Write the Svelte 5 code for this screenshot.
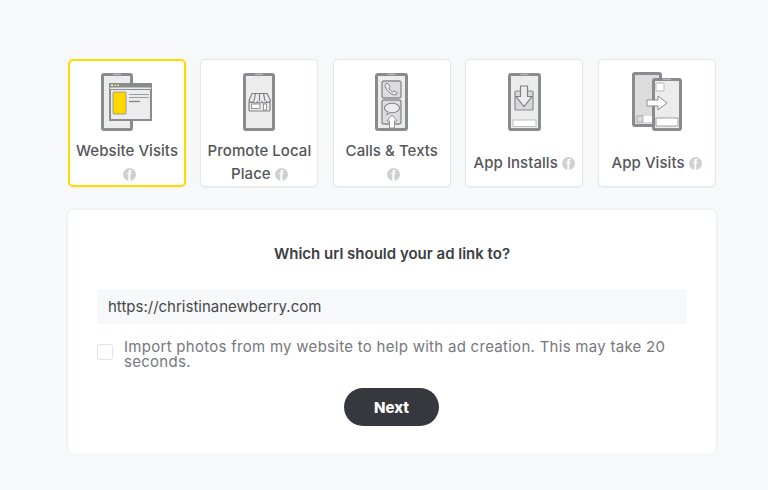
<script>
  const cards = [
    { label: 'Website Visits', icon: 'web', active: true },
    { label: 'Promote Local Place', icon: 'store' },
    { label: 'Calls & Texts', icon: 'calls' },
    { label: 'App Installs', icon: 'install' },
    { label: 'App Visits', icon: 'visits' }
  ];
</script>

{#snippet phone(x, y, w, h)}
  <rect x={x + 1.5} y={y + 1.5} width={w - 3} height={h - 3} rx="1.5" fill="#ececec" stroke="#8a8b8e" stroke-width="3" />
  <rect x={x + w / 2 - 4} y={y + 0.8} width="8" height="1" fill="#c8c8ca" />
{/snippet}

<main class="page">
  <section class="cards">
    {#each cards as card}
      <article class="card" class:active={card.active}>
        <svg class="art" viewBox="0 0 60 60" width="60" height="60" aria-hidden="true">
          {#if card.icon === 'web'}
            {@render phone(4, 1, 32, 58)}
            <rect x="12.5" y="11.5" width="42" height="37" fill="#ececec" stroke="#8a8b8e" />
            <rect x="12" y="11" width="43" height="4.5" fill="#8a8b8e" />
            <rect x="14" y="12.5" width="2" height="1.5" fill="#fff" />
            <rect x="17" y="12.5" width="2" height="1.5" fill="#ffd800" />
            <rect x="20" y="12.5" width="2" height="1.5" fill="#ddd" />
            <rect x="13.5" y="17.5" width="40" height="30" fill="#ececec" stroke="#8a8b8e" />
            <rect x="16" y="20" width="13" height="22" rx="1" fill="#ffd800" stroke="#8a8b8e" stroke-width=".8" />
            <path d="M32 22.500h20M32 25.500h20" stroke="#9a9b9e" stroke-width="1" />
            <path d="M32 29.500h11" stroke="#8a8b8e" stroke-width="1.400" />
          {:else if card.icon === 'store'}
            {@render phone(14, 1, 32, 58)}
            <g fill="#ececec" stroke="#808185" stroke-width="1.200">
              <rect x="20" y="30" width="21" height="9" rx="1" />
              <path d="M23 21.500h15l3.500 7a2.400 2.400 0 0 1-4 1.200 2.600 2.600 0 0 1-4.500 0 2.600 2.600 0 0 1-4.500 0 2.600 2.600 0 0 1-4.500 0 2.400 2.400 0 0 1-4-1.200z" />
              <path d="M26.500 21.500l-1.500 7.500M30.500 21.500v7.500M34.500 21.500l1.500 7.500" />
              <rect x="22.500" y="32" width="8.500" height="4.500" fill="#fff" stroke-width=".8" />
              <rect x="34.500" y="32" width="3" height="6" fill="#fff" stroke-width=".8" />
            </g>
          {:else if card.icon === 'calls'}
            {@render phone(13, 1, 33, 58)}
            <rect x="20" y="9" width="19" height="17" rx="2" fill="#dcdcdc" stroke="#8a8b8e" stroke-width="1.300" />
            <rect x="20" y="28" width="19" height="24" rx="2" fill="#dcdcdc" stroke="#8a8b8e" stroke-width="1.300" />
            <path d="M24 11.500c-1.300 1-1.300 2.500 0 5 1.700 3 4.300 5.300 7.500 6.200 2.300.5 4-.7 4-1.700l-3.500-2.200-1.700 1.300c-1.700-.9-3-2.600-3.500-4.300l1.300-1.300-2.100-3z" fill="#ececec" stroke="#808185" />
            <ellipse cx="30" cy="36" rx="7.500" ry="4.800" fill="#ececec" stroke="#808185" stroke-width="1.100" />
            <path d="M26 40l-1.300 2.700 3.800-2" fill="#ececec" stroke="#808185" stroke-width=".9" />
            <path d="M30 43l-5 6h2.500v7h5v-7h2.500z" fill="#fff" stroke="#8a8b8e" stroke-width=".9" />
          {:else if card.icon === 'install'}
            {@render phone(14, 1, 33, 58)}
            <rect x="21" y="19" width="18" height="19" rx="1" fill="#d8d8d8" stroke="#8a8b8e" stroke-width="1.200" />
            <path d="M26.500 14h7v10.500h4.500l-8 10-8-10h4.500z" fill="#ececec" stroke="#808185" stroke-width="1.200" />
            <rect x="19" y="48" width="23" height="6.500" fill="#fff" stroke="#9a9b9e" stroke-width=".6" />
          {:else}
            <rect x="6.500" y="1.500" width="27" height="52" rx="1.500" fill="#dcdcdc" stroke="#8a8b8e" stroke-width="3" />
            <rect x="10" y="44" width="20" height="6" fill="#fff" />
            <rect x="10" y="44" width="6" height="6" fill="#dcdcdc" stroke="#8a8b8e" stroke-width=".6" />
            {@render phone(25, 6, 30, 53)}
            <rect x="29" y="11" width="8" height="8" rx="1" fill="#fff" stroke="#a8a8aa" stroke-width=".8" />
            <rect x="29" y="46" width="22" height="8" fill="#fff" stroke="#8a8b8e" stroke-width=".8" />
            <path d="M20 28h11v-4l9 7-9 7v-4h-11z" fill="#fff" stroke="#8a8b8e" stroke-width="1" />
          {/if}
        </svg>
        <div class="label">
          <span>{card.label}<svg class="info" viewBox="0 0 13 13" width="13" height="13" aria-hidden="true">
              <circle cx="6.500" cy="6.500" r="6.500" fill="#cfd0d2" />
              <path d="M5.400 13V6.200H4.300V5h1.100V4c0-1.500 1-2.300 2.300-2.300h1v1.500h-.6c-.6 0-.8.300-.8.800V5h1.300v1.200H7.300V13z" fill="#fff" />
            </svg></span>
        </div>
      </article>
    {/each}
  </section>

  <section class="panel">
    <h2>Which url should your ad link to?</h2>
    <div class="field">https://christinanewberry.com</div>
    <div class="check">
      <span class="box"></span>
      <p>Import photos from my website to help with ad creation. This may take 20 seconds.</p>
    </div>
    <div class="actions"><button type="button">Next</button></div>
  </section>
</main>

<style>
  :global(body) {
    margin: 0;
    background: #f7f8fa;
  }
  .page {
    width: 648px;
    margin: 0 0 0 68px;
    padding-top: 59px;
    font-family: Inter, "Noto Sans", sans-serif;
  }
  .cards {
    display: flex;
    gap: 14.4px;
  }
  .card {
    box-sizing: border-box;
    flex: 0 0 118px;
    height: 128px;
    display: flex;
    flex-direction: column;
    align-items: center;
    padding: 12px 5px 0;
    background: #fff;
    border: 1px solid #e6e7e9;
    border-radius: 5px;
    box-shadow: 0 1px 2px rgba(40, 45, 60, 0.05);
  }
  .card.active {
    border: 2px solid #ffdc00;
    padding: 11px 4px 0;
  }
  .art {
    flex: none;
    display: block;
  }
  .label {
    flex: 1;
    display: flex;
    align-items: center;
    justify-content: center;
    width: 100%;
    padding-top: 6px;
    text-align: center;
    font-size: 15px;
    font-weight: 500;
    line-height: 23px;
    letter-spacing: 0.05px;
    color: #55565a;
  }
  .info {
    display: inline-block;
    vertical-align: -2px;
    margin-left: 4px;
  }
  .panel {
    box-sizing: border-box;
    height: 243px;
    margin-top: 23px;
    padding: 34px 29px 0;
    background: #fff;
    border-radius: 5px;
    box-shadow: 0 0 3px rgba(40, 45, 60, 0.12);
  }
  h2 {
    margin: 0;
    text-align: center;
    font-size: 15px;
    line-height: 20px;
    font-weight: 600;
    color: #3c3e42;
  }
  .field {
    margin-top: 25px;
    height: 35px;
    padding-left: 11px;
    background: #f7f8fa;
    border-radius: 2px;
    font-size: 15px;
    line-height: 35px;
    color: #46484c;
  }
  .check {
    display: flex;
    gap: 11px;
    margin-top: 20px;
  }
  .box {
    box-sizing: border-box;
    flex: none;
    width: 16px;
    height: 16px;
    border: 1px solid #e3e4e6;
    border-radius: 3px;
  }
  p {
    margin: -5px 0 0;
    font-size: 15px;
    line-height: 15px;
    letter-spacing: 0.28px;
    color: #77787c;
  }
  .actions {
    display: flex;
    justify-content: center;
    margin-top: 19px;
    padding-right: 1px;
  }
  button {
    width: 95px;
    height: 38px;
    border: 0;
    border-radius: 19px;
    background: #35383d;
    color: #fff;
    font: 800 15px Inter, "Noto Sans", sans-serif;
  }
</style>
